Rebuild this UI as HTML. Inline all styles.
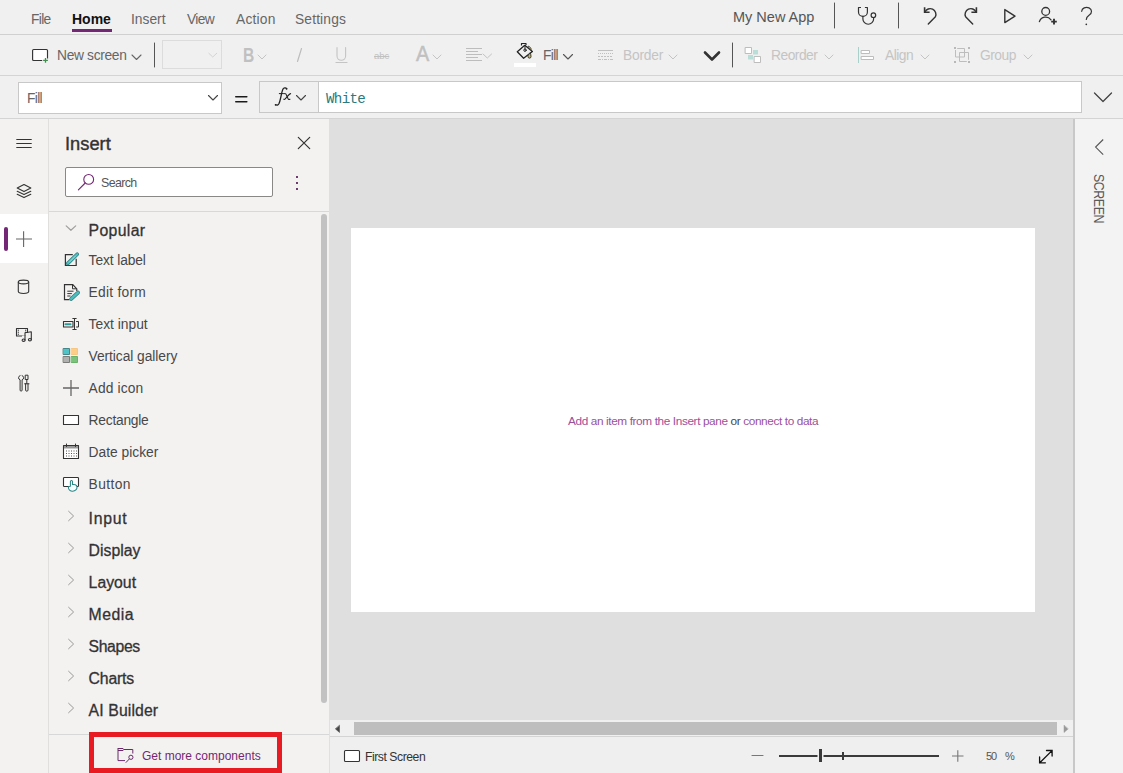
<!DOCTYPE html>
<html><head><meta charset="utf-8">
<style>
*{box-sizing:border-box;margin:0;padding:0}
html,body{width:1123px;height:773px;overflow:hidden;background:#f0f0f0;font-family:"Liberation Sans",sans-serif;color:#333}
.a{position:absolute}
.t{position:absolute;white-space:nowrap;line-height:1}
svg{position:absolute;overflow:visible}
</style></head><body>

<!-- top menubar -->
<div class="a" style="left:0;top:0;width:1123px;height:35px;background:#f0f0f0;border-bottom:1px solid #d0d0d0"></div>
<div class="t" id="m_file" style="left:31px;top:13px;font-size:13.8px;color:#666;letter-spacing:-0.667px">File</div>
<div class="t" id="m_home" style="left:72px;top:12px;font-size:14px;font-weight:bold;color:#111;letter-spacing:0px">Home</div>
<div class="a" style="left:72px;top:29px;width:40px;height:3px;background:#742774"></div>
<div class="t" id="m_insert" style="left:131px;top:13px;font-size:13.8px;color:#666">Insert</div>
<div class="t" id="m_view" style="left:187px;top:13px;font-size:13.8px;color:#666;letter-spacing:-0.667px">View</div>
<div class="t" id="m_action" style="left:236px;top:13px;font-size:13.8px;color:#666;letter-spacing:0.2px">Action</div>
<div class="t" id="m_settings" style="left:295px;top:13px;font-size:13.8px;color:#666;letter-spacing:0.143px">Settings</div>

<div class="t" id="appname" style="left:733px;top:10px;font-size:14.5px;color:#555">My New App</div>

<!-- toolbar -->
<div class="a" style="left:0;top:35px;width:1123px;height:41px;background:#f0f0f0;border-bottom:1px solid #d4d4d4"></div>

<!-- formula bar -->
<div class="a" style="left:0;top:76px;width:1123px;height:43px;background:#f0f0f0;border-bottom:1px solid #d4d4d4"></div>
<div class="a" style="left:18px;top:82px;width:204px;height:32px;background:#fff;border:1px solid #c8c8c8"></div>
<div class="t" id="f_fill" style="left:27px;top:92px;font-size:13.8px;color:#666;letter-spacing:-0.667px">Fill</div>
<div class="a" style="left:259px;top:81px;width:823px;height:32px;background:#fff;border:1px solid #c8c8c8"></div>
<div class="a" style="left:260px;top:82px;width:59px;height:30px;background:#f0f0f0;border-right:1px solid #c8c8c8"></div>
<div class="t" id="f_white" style="left:326px;top:92px;font-size:14.2px;font-family:'Liberation Mono',monospace;color:#2a7a80;letter-spacing:-0.7px">White</div>


<!-- toolbar items -->
<svg style="left:0;top:0" width="1123" height="120">
 <g fill="none" stroke-linecap="round" stroke-linejoin="round">
  <!-- new screen icon -->
  <rect x="33" y="49.5" width="14" height="11" fill="#fff" stroke="none"/>
  <path d="M42.2 60.5h-8.6a1 1 0 0 1 -1 -1v-9a1 1 0 0 1 1 -1h12.9a1 1 0 0 1 1 1v8.1" stroke="#333" stroke-width="1.15" stroke-linecap="butt"/>
  <path d="M45.5 58.1v4.7M43.1 60.4h4.8" stroke="#3f8f4e" stroke-width="1.3" stroke-linecap="butt"/>
  <path d="M132 55l4.5 4.5l4.5-4.5" stroke="#666" stroke-width="1.1"/>
  <!-- separator -->
  <path d="M154.5 43v24" stroke="#555" stroke-width="1"/>
  <!-- B chevron -->
  <path d="M258 55l4 4l4-4" stroke="#c4c4c4" stroke-width="1"/>
  <path d="M433 55l4 4l4-4" stroke="#c4c4c4" stroke-width="1"/>
  <path d="M483 54l4.3 4l4.3-4" stroke="#c4c4c4" stroke-width="1"/>
  <!-- italic slash -->
  <path d="M301.5 48.5l-4 13" stroke="#bdbdbd" stroke-width="1.2"/>
  <!-- U -->
  <path d="M337 47.5v8.5a4.3 4.3 0 0 0 8.6 0v-8.5" stroke="#c4c4c4" stroke-width="1.1"/>
  <path d="M336 62.5h11" stroke="#c4c4c4" stroke-width="1.1"/>
  <!-- align lines -->
  <path d="M466 48.5h16M466 51.5h12M466 54.5h16M466 57.5h12M466 60.5h16" stroke="#bdbdbd" stroke-width="1" stroke-linecap="butt"/>
  <!-- fill bucket -->
  <rect x="514" y="63" width="22" height="4" fill="#fff" stroke="none"/>
  <path d="M521.5 45.5v-2h4.5v1.5" stroke="#222" stroke-width="1.2" stroke-linecap="butt"/>
  <path d="M524.8 45.3l7.6 6.2l-8.8 6.8l-6.3-6.5z" stroke="#222" stroke-width="1.3"/>
  <path d="M525 45.5v3.5" stroke="#222" stroke-width="1"/>
  <circle cx="525" cy="50.2" r="1.2" stroke="#222" stroke-width="1"/>
  <path d="M528.5 46.2c1.5 0.3 2.8 1.8 2.7 3.6l-2.7-2.2z" fill="#c9bb72" stroke="#444" stroke-width="0.9"/>
  <path d="M530.3 52.8c-1 1.2-2.3 2.3-2.3 3.8a1.5 1.5 0 0 0 3 0c0-1.2-0.3-2.5-0.7-3.8z" fill="#c9bb72" stroke="#333" stroke-width="1"/>
  <!-- fill chevron -->
  <path d="M563.5 54.5l4.5 4.5l4.5-4.5" stroke="#555" stroke-width="1.1"/>
  <!-- border icon -->
  <g fill="#c0c0c0" stroke="none"><rect x="598" y="50" width="15" height="1"/><rect x="598" y="53" width="1" height="1"/><rect x="600" y="53" width="1" height="1"/><rect x="602" y="53" width="1" height="1"/><rect x="604" y="53" width="1" height="1"/><rect x="606" y="53" width="1" height="1"/><rect x="608" y="53" width="1" height="1"/><rect x="610" y="53" width="1" height="1"/><rect x="612" y="53" width="1" height="1"/><rect x="598" y="56" width="2" height="1"/><rect x="601" y="56" width="2" height="1"/><rect x="604" y="56" width="2" height="1"/><rect x="607" y="56" width="2" height="1"/><rect x="610" y="56" width="2" height="1"/><rect x="598" y="59" width="3" height="1"/><rect x="602" y="59" width="1" height="1"/><rect x="604" y="59" width="3" height="1"/><rect x="608" y="59" width="1" height="1"/><rect x="610" y="59" width="3" height="1"/></g>
  <path d="M669 55l4 4l4-4" stroke="#c4c4c4" stroke-width="1"/>
  <!-- big chevron -->
  <path d="M705 52.5l7 7l7-7" stroke="#333" stroke-width="2.6"/>
  <path d="M732.5 43v24" stroke="#555" stroke-width="1"/>
  <!-- reorder -->
  <rect x="745.5" y="47.5" width="6" height="6" fill="#fff" stroke="#bdbdbd" stroke-width="1"/>
  <rect x="753" y="50" width="5" height="4.5" fill="#b9ddd7" stroke="none"/>
  <rect x="748" y="55" width="5" height="4.5" fill="#b9ddd7" stroke="none"/>
  <rect x="754.5" y="56.5" width="6" height="6" fill="#fff" stroke="#bdbdbd" stroke-width="1"/>
  <path d="M825 55l4 4l4-4" stroke="#c4c4c4" stroke-width="1"/>
  <!-- align -->
  <path d="M858.5 47v16" stroke="#a9d0cb" stroke-width="1" stroke-linecap="butt"/>
  <rect x="861.5" y="50.5" width="8" height="3" fill="#fff" stroke="#bdbdbd" stroke-width="1"/>
  <rect x="861.5" y="56.5" width="12" height="3" fill="#fff" stroke="#bdbdbd" stroke-width="1"/>
  <path d="M921 55l4 4l4-4" stroke="#c4c4c4" stroke-width="1"/>
  <!-- group -->
  <g fill="#b8b8b8" stroke="none"><rect x="954" y="47" width="2" height="2"/><rect x="968" y="47" width="2" height="2"/><rect x="954" y="61" width="2" height="2"/><rect x="968" y="61" width="2" height="2"/></g>
  <path d="M957.2 48.5h7.3v8.5h-9v-7" stroke="#bdbdbd" stroke-width="1" stroke-linecap="butt" stroke-linejoin="miter"/>
  <path d="M966.8 61.5h-7.3v-9h9v7.3" stroke="#bdbdbd" stroke-width="1" stroke-linecap="butt" stroke-linejoin="miter"/>
  <path d="M1024 55l4 4l4-4" stroke="#c4c4c4" stroke-width="1"/>

  <!-- top right icons -->
  <path d="M834.5 3v25M898.5 3v25" stroke="#555" stroke-width="1"/>
  <!-- stethoscope -->
  <path d="M861 7.5h-2.5v4.5a4.45 4.45 0 0 0 8.9 0v-4.5h-2.5" stroke="#333" stroke-width="1.2" stroke-linecap="butt"/>
  <path d="M862.9 16.4v2.5a5.35 5.35 0 0 0 10.7 0v-1.3" stroke="#333" stroke-width="1.2"/>
  <circle cx="873.4" cy="15.2" r="2.3" stroke="#333" stroke-width="1.2"/>
  <!-- undo -->
  <path d="M924.6 7.3v5h5" stroke="#333" stroke-width="1.6" stroke-linecap="butt" stroke-linejoin="miter"/>
  <path d="M925 12a5.6 5.6 0 1 1 10.4 4.8l-7.1 7.3" stroke="#333" stroke-width="1.4"/>
  <!-- redo -->
  <path d="M976.4 7.3v5h-5" stroke="#333" stroke-width="1.6" stroke-linecap="butt" stroke-linejoin="miter"/>
  <path d="M976 12a5.6 5.6 0 1 0 -10.4 4.8l7.1 7.3" stroke="#333" stroke-width="1.4"/>
  <!-- play -->
  <path d="M1004.8 9.6v13l10.2-6.5z" stroke="#333" stroke-width="1.4"/>
  <!-- person add -->
  <circle cx="1045.7" cy="11.4" r="3.9" stroke="#333" stroke-width="1.3"/>
  <path d="M1039.4 21.6a6.6 6.6 0 0 1 11.6 -1.8" stroke="#333" stroke-width="1.3"/>
  <path d="M1054 18.8v5.6M1051.2 21.6h5.6" stroke="#333" stroke-width="1.9" stroke-linecap="butt"/>
  <!-- help -->
  <path d="M1081.7 11.3a4.9 4.1 0 1 1 7.6 3.6c-2.2 1.5 -3 2.5 -3 4.6" stroke="#333" stroke-width="1.2"/>
  <circle cx="1086.3" cy="24.3" r="0.85" fill="#333" stroke="none"/>

  <!-- formula bar -->
  <path d="M208.5 95.5l4.5 4.5l4.5-4.5" stroke="#444" stroke-width="1.1"/>
  <path d="M235.8 96.8h11M235.8 101.7h11" stroke="#1a1a1a" stroke-width="1.6" stroke-linecap="round"/>
  <path d="M296.5 95.5l4.5 4.5l4.5-4.5" stroke="#444" stroke-width="1.1"/>
  <path d="M1094.5 93l8.5 8.5l8.5-8.5" stroke="#444" stroke-width="1.3"/>
 </g>
</svg>
<div class="t" id="tb_newscreen" style="left:57px;top:49px;font-size:13.8px;color:#666;letter-spacing:-0.333px">New screen</div>
<div class="a" style="left:162px;top:40px;width:60px;height:29px;border:1px solid #dcdcdc;background:#f0f0f0"></div>
<svg style="left:0;top:0" width="400" height="80"><path d="M208.5 53l4.25 4l4.25-4" fill="none" stroke="#d4d4d4" stroke-width="1"/></svg>
<div class="t" id="tb_b" style="left:243px;top:46px;font-size:19.5px;font-weight:bold;color:#c0c0c0;transform-origin:0 0;transform:scaleX(0.8)">B</div>
<div class="t" style="left:374px;top:51px;font-size:9.5px;color:#c0c0c0;text-decoration:line-through">abc</div>
<div class="t" id="tb_a" style="left:416px;top:44px;font-size:21.5px;color:#c0c0c0;-webkit-text-stroke:0.5px #c0c0c0;transform-origin:0 0;transform:scaleX(0.92)">A</div>
<div class="t" id="tb_fill" style="left:543px;top:49px;font-size:13.8px;color:#666;letter-spacing:-0.667px">Fill</div>
<div class="t" id="tb_border" style="left:623px;top:49px;font-size:13.8px;color:#c4c4c4;letter-spacing:-0.2px">Border</div>
<div class="t" id="tb_reorder" style="left:771px;top:49px;font-size:13.8px;color:#c4c4c4;letter-spacing:-0.5px">Reorder</div>
<div class="t" id="tb_align" style="left:885px;top:49px;font-size:13.8px;color:#c4c4c4;letter-spacing:-0.5px">Align</div>
<div class="t" id="tb_group" style="left:980px;top:49px;font-size:13.8px;color:#c4c4c4;letter-spacing:-0.5px">Group</div>
<svg style="left:0;top:0" width="320" height="120"><g fill="none" stroke="#222" stroke-linecap="round">
 <path d="M286.6 88.6c-0.6-0.9-2.2-1.1-3.1-0.2c-1 1-1.5 3.2-2.2 6.4c-0.8 3.6-1.3 6.8-2.4 9c-0.7 1.3-2 1.6-3 1" stroke-width="1.3"/>
 <circle cx="286.6" cy="88.8" r="0.9" fill="#222" stroke="none"/>
 <circle cx="275.6" cy="104.8" r="0.9" fill="#222" stroke="none"/>
 <path d="M279.3 93.6h4.2" stroke-width="1"/>
 <path d="M284.6 93.6c1.2-0.3 1.7 0.5 2.2 2.2l1.2 2.8c0.4 0.9 1 1.1 1.9 0.6" stroke-width="1.1"/>
 <path d="M290.6 93.6c-0.8 0.1-1.6 0.9-3.2 2.8l-2.2 2.4c-0.5 0.5-1 0.6-1.3 0.4" stroke-width="1.1"/>
</g></svg>

<!-- left rail -->
<div class="a" style="left:0;top:119px;width:49px;height:654px;background:#f3f2f1;border-right:1px solid #e1dfdd"></div>
<div class="a" style="left:0;top:214px;width:48px;height:49px;background:#fff"></div>
<div class="a" style="left:4px;top:227px;width:4px;height:24px;border-radius:2px;background:#742774"></div>

<!-- insert panel -->
<div class="a" style="left:49px;top:119px;width:280px;height:654px;background:#f3f2f1"></div>
<div class="t" id="p_title" style="left:65px;top:135px;font-size:18.3px;color:#333;-webkit-text-stroke:0.4px #333">Insert</div>
<div class="a" style="left:65px;top:167px;width:208px;height:30px;background:#fff;border:1px solid #8a8886;border-radius:2px"></div>
<div class="t" id="p_search" style="left:101px;top:177px;font-size:12.4px;color:#555;letter-spacing:-0.6px">Search</div>
<div class="a" style="left:49px;top:211px;width:280px;height:1px;background:#d8d8d8"></div>
<div class="a" style="left:321px;top:214px;width:6px;height:489px;border-radius:3px;background:#c2c2c2"></div>
<div class="a" style="left:49px;top:734px;width:280px;height:1px;background:#d8d8d8"></div>


<svg style="left:0;top:0" width="330" height="773">
 <g fill="none" stroke-linecap="round" stroke-linejoin="round">
  <path d="M298.3 137.3l11.4 11.4M309.7 137.3l-11.4 11.4" stroke="#333" stroke-width="1.2"/>
  <circle cx="88.7" cy="179.4" r="4.9" stroke="#742774" stroke-width="1.1"/>
  <path d="M85.2 183l-6.8 6.8" stroke="#742774" stroke-width="1.1"/>
  <g fill="#6e3a6e" stroke="none"><rect x="296" y="176" width="2" height="2"/><rect x="296" y="182" width="2" height="2"/><rect x="296" y="188" width="2" height="2"/></g>
  <path d="M66.2 225.9l4.7 4.4l4.8-4.4" stroke="#a0a0a0" stroke-width="1.25"/>
  <!-- text label -->
  <path d="M72.8 254.7h-7.4v10.8h10.8v-6.8" stroke="#333" stroke-width="1.2" stroke-linecap="butt" stroke-linejoin="miter"/>
  <path d="M77.2 254.2l-9.4 9.2" stroke="#2b7f80" stroke-width="3.6" stroke-linecap="round"/>
  <path d="M77.2 254.2l-9.4 9.2" stroke="#4dbdbd" stroke-width="2.2" stroke-linecap="round"/>
  <path d="M75.5 256l-6 6" stroke="#cdeeee" stroke-width="0.6"/>
  <!-- edit form -->
  <path d="M69.5 299.6h-5v-15h8.3l4 4.3v2" stroke="#333" stroke-width="1.2" stroke-linecap="butt" stroke-linejoin="miter"/>
  <path d="M72.5 284.6v4.2h4" stroke="#333" stroke-width="1" stroke-linecap="butt"/>
  <path d="M67.3 291.2h6.2M67.3 293.6h4.6M67.3 296h3.2" stroke="#333" stroke-width="1" stroke-linecap="butt"/>
  <path d="M78 292.6l-6.8 6.3" stroke="#2b7f80" stroke-width="4" stroke-linecap="round"/>
  <path d="M78 292.6l-6.8 6.3" stroke="#4dbdbd" stroke-width="2.6" stroke-linecap="round"/>
  <!-- text input -->
  <rect x="63.5" y="321.5" width="9.5" height="5.5" stroke="#333" stroke-width="1.1"/>
  <path d="M65.5 324.2h5" stroke="#2b9a9a" stroke-width="2"/>
  <path d="M74.5 318.5v11M72.8 318.5h3.4M72.8 329.5h3.4" stroke="#333" stroke-width="1"/>
  <path d="M76.5 321.5h2v5.5h-2" stroke="#333" stroke-width="1"/>
  <!-- gallery -->
  <rect x="63.5" y="348.5" width="6" height="6" fill="#4fc3c8" stroke="#3c7b7e" stroke-width="0.9"/>
  <rect x="71.5" y="348.5" width="6" height="6" fill="#fdce87" stroke="#f5c47c" stroke-width="0.9"/>
  <rect x="63.5" y="356.5" width="6" height="6" fill="#b0b0b0" stroke="#707070" stroke-width="0.9"/>
  <rect x="71.5" y="356.5" width="6" height="6" fill="#7cc27c" stroke="#5fae60" stroke-width="0.9"/>
  <!-- add icon -->
  <path d="M63 388h16M71 380v16" stroke="#666" stroke-width="1.3" stroke-linecap="butt"/>
  <!-- rectangle -->
  <rect x="63.5" y="415.5" width="15" height="9" fill="#fff" stroke="#333" stroke-width="1.1"/>
  <!-- date picker -->
  <rect x="63.5" y="445.5" width="15" height="13" fill="#fff" stroke="#333" stroke-width="1.1"/>
  <rect x="64" y="446" width="14" height="2.5" fill="#999" stroke="none"/>
  <path d="M66.5 444v2.5M75.5 444v2.5" stroke="#333" stroke-width="1"/>
  <g fill="#555" stroke="none">
   <rect x="66" y="450.5" width="1" height="1"/><rect x="68.5" y="450.5" width="1" height="1"/><rect x="71" y="450.5" width="1" height="1"/><rect x="73.5" y="450.5" width="1" height="1"/><rect x="76" y="450.5" width="1" height="1"/>
   <rect x="66" y="453" width="1" height="1"/><rect x="68.5" y="453" width="1" height="1"/><rect x="71" y="453" width="1" height="1"/><rect x="73.5" y="453" width="1" height="1"/><rect x="76" y="453" width="1" height="1"/>
   <rect x="66" y="455.5" width="1" height="1"/><rect x="68.5" y="455.5" width="1" height="1"/><rect x="71" y="455.5" width="1" height="1"/><rect x="73.5" y="455.5" width="1" height="1"/><rect x="76" y="455.5" width="1" height="1"/>
  </g>
  <!-- button -->
  <rect x="63.5" y="477.5" width="15" height="9" rx="0.8" fill="#fff" stroke="#333" stroke-width="1.1"/>
  <path d="M70.4 486.2v-4.7a1.05 1.05 0 0 1 2.1 0v3c1.6-0.3 4.5 0.2 4.5 2.4c0.1 2.5-1.7 4.3-4.3 4.3c-2.6 0-4.3-1.9-4.3-3.9c0-0.7 0.8-1.2 2-1.1z" fill="#f4ffff" stroke="#2a8585" stroke-width="1.05"/>
  <!-- category chevrons -->
  <g stroke="#999" stroke-width="1">
   <path d="M68.6 511.3l5 4.7l-5 4.7"/>
   <path d="M68.6 543.3l5 4.7l-5 4.7"/>
   <path d="M68.6 575.3l5 4.7l-5 4.7"/>
   <path d="M68.6 607.3l5 4.7l-5 4.7"/>
   <path d="M68.6 639.3l5 4.7l-5 4.7"/>
   <path d="M68.6 671.3l5 4.7l-5 4.7"/>
   <path d="M68.6 703.3l5 4.7l-5 4.7"/>
  </g>
  <!-- get more components icon -->
  <g stroke="#6a2a6a" stroke-width="1" stroke-linecap="butt" stroke-linejoin="miter">
   <path d="M118 748.5h5.3M118 750.5h5.3"/>
   <path d="M123.3 749.5h9.5v4"/>
   <path d="M118 748v12.6h7"/>
   <circle cx="130.9" cy="757.3" r="2.1"/>
   <path d="M129.4 758.9l-3.6 3.8"/>
  </g>
 </g>
</svg>
<div class="t" id="c_popular" style="left:88.6px;top:223px;font-size:15.8px;color:#333;-webkit-text-stroke:0.3px #333;letter-spacing:0.333px">Popular</div>
<div class="t" id="i_textlabel" style="left:88.6px;top:254px;font-size:13.8px;color:#484848;letter-spacing:-0.111px">Text label</div>
<div class="t" id="i_editform" style="left:88.6px;top:286px;font-size:13.8px;color:#484848;letter-spacing:0.25px">Edit form</div>
<div class="t" id="i_textinput" style="left:88.6px;top:318px;font-size:13.8px;color:#484848">Text input</div>
<div class="t" id="i_gallery" style="left:88.6px;top:350px;font-size:13.8px;color:#484848;letter-spacing:-0.067px">Vertical gallery</div>
<div class="t" id="i_addicon" style="left:88.6px;top:382px;font-size:13.8px;color:#484848;letter-spacing:0.143px">Add icon</div>
<div class="t" id="i_rect" style="left:88.6px;top:414px;font-size:13.8px;color:#484848;letter-spacing:-0.25px">Rectangle</div>
<div class="t" id="i_date" style="left:88.6px;top:446px;font-size:13.8px;color:#484848">Date picker</div>
<div class="t" id="i_button" style="left:88.6px;top:478px;font-size:13.8px;color:#484848;letter-spacing:0.4px">Button</div>
<div class="t" id="c_input" style="left:88.6px;top:511px;font-size:15.8px;color:#333;-webkit-text-stroke:0.3px #333;letter-spacing:0.75px">Input</div>
<div class="t" id="c_display" style="left:88.6px;top:543px;font-size:15.8px;color:#333;-webkit-text-stroke:0.3px #333">Display</div>
<div class="t" id="c_layout" style="left:88.6px;top:575px;font-size:15.8px;color:#333;-webkit-text-stroke:0.3px #333">Layout</div>
<div class="t" id="c_media" style="left:88.6px;top:607px;font-size:15.8px;color:#333;-webkit-text-stroke:0.3px #333;letter-spacing:0.5px">Media</div>
<div class="t" id="c_shapes" style="left:88.6px;top:639px;font-size:15.8px;color:#333;-webkit-text-stroke:0.3px #333;letter-spacing:-0.4px">Shapes</div>
<div class="t" id="c_charts" style="left:88.6px;top:671px;font-size:15.8px;color:#333;-webkit-text-stroke:0.3px #333;letter-spacing:-0.2px">Charts</div>
<div class="t" id="c_ai" style="left:88.6px;top:703px;font-size:15.8px;color:#333;-webkit-text-stroke:0.3px #333;letter-spacing:0.111px">AI Builder</div>
<div class="t" id="p_getmore" style="left:142px;top:750px;font-size:12px;color:#742774">Get more components</div>

<!-- canvas area -->
<div class="a" style="left:329px;top:119px;width:746px;height:601px;background:#dfdfdf;border-right:2px solid #c8c8c8"></div>
<div class="a" style="left:351px;top:228px;width:684px;height:384px;background:#fff"></div>

<!-- right panel -->
<div class="a" style="left:1075px;top:119px;width:48px;height:654px;background:#f3f3f3"></div>

<!-- h scroll -->
<div class="a" style="left:329px;top:720px;width:744px;height:17px;background:#f0f0f0;border-bottom:1px solid #d4d4d4"></div>
<div class="a" style="left:354px;top:722px;width:703px;height:13px;background:#bebebe"></div>

<!-- bottom bar -->
<div class="a" style="left:329px;top:737px;width:744px;height:36px;background:#efefef"></div>
<div class="a" style="left:1073px;top:719px;width:2px;height:54px;background:#c8c8c8"></div>
<div class="a" style="left:329px;top:720px;width:1px;height:53px;background:#e0e0e0"></div>


<svg style="left:0;top:700px" width="1123" height="73">
 <g fill="none" stroke-linecap="round">
  <path d="M339.5 25.5v7l-4-3.5z" fill="#444" stroke="#444" stroke-width="0.5"/>
  <path d="M1064 25.5v7l4-3.5z" fill="#999" stroke="#999" stroke-width="0.5"/>
  <rect x="344.5" y="50.5" width="15" height="11" rx="1" fill="#fff" stroke="#333" stroke-width="1.1"/>
  <path d="M752 55.5h11" stroke="#777" stroke-width="1.1"/>
  <rect x="779" y="55" width="160" height="2" fill="#3a3a3a" stroke="none"/>
  <rect x="817.5" y="48" width="6" height="15" fill="#efefef" stroke="none"/>
  <rect x="819" y="49" width="3" height="13" fill="#3a3a3a" stroke="none"/>
  <rect x="842" y="52" width="2" height="8" fill="#3a3a3a" stroke="none"/>
  <path d="M952 56h11.5M957.8 50.2v11.5" stroke="#777" stroke-width="1.1" stroke-linecap="butt"/>
  <path d="M1039.8 62.8l12.2-12.2M1046.5 50.5h5.6v5.6M1039.6 57v5.8h5.8" stroke="#111" stroke-width="1.3"/>
 </g>
</svg>
<div class="t" id="b_first" style="left:365px;top:751px;font-size:12.2px;color:#333;letter-spacing:-0.455px">First Screen</div>
<div class="t" id="b_50" style="left:986px;top:751px;font-size:11px;color:#555;letter-spacing:-1px">50</div>
<div class="t" id="b_pct" style="left:1005px;top:751px;font-size:11px;color:#555">%</div>

<div class="t" id="cv_text" style="left:568px;top:416px;font-size:11.8px;color:#9c4f9c;letter-spacing:-0.38px">Add an item from the Insert pane <span style="color:#444">or</span> connect to data</div>
<svg style="left:1075px;top:119px" width="48" height="120">
 <path d="M28.2 20.5l-7.6 7.6l7.6 7.6" fill="none" stroke="#555" stroke-width="1.1"/>
</svg>
<div class="t" id="screen" style="left:1094px;top:174px;font-size:12.4px;color:#5a5a5a;transform-origin:0 0;transform:rotate(90deg) translate(0,-11.5px) scaleY(1.12);letter-spacing:-0.45px">SCREEN</div>

<svg style="left:0;top:0" width="49" height="400">
 <g fill="none" stroke="#333" stroke-width="1.1" stroke-linecap="round" stroke-linejoin="round">
  <path d="M16.3 139.5h15.4M16.3 143.5h15.4M16.3 147.5h15.4" stroke-linecap="butt"/>
  <path d="M24 184.6l6.8 3.5l-6.8 3.5l-6.8-3.5z"/>
  <path d="M17.2 191.2l6.8 3.3l6.8-3.3"/>
  <path d="M17.2 194.3l6.8 3.3l6.8-3.3"/>
  <path d="M16 239h16M23.6 231.3v15.6" stroke="#666" stroke-width="1.1" stroke-linecap="butt"/>
  <ellipse cx="23.5" cy="282" rx="5.2" ry="1.9"/>
  <path d="M18.3 282v9.6a5.2 1.9 0 0 0 10.4 0v-9.6"/>
  <rect x="16.5" y="328.5" width="11" height="7.5"/>
  <path d="M18.3 330v0.6M18.3 332v0.6M18.3 334v0.6M25.7 330v0.6M25.7 332v0.6" stroke-width="0.9"/>
  <path d="M23 336.5h4v-3" stroke="#f3f2f1" stroke-width="2.2"/>
  <path d="M25 340v-7.2l6.3-1v7.7" stroke-width="1.1"/>
  <ellipse cx="23.6" cy="340.2" rx="1.5" ry="1.2"/>
  <ellipse cx="29.9" cy="339.7" rx="1.5" ry="1.2"/>
  <path d="M20.1 375.6a2.2 2.2 0 0 0 0 4.2v10.3a1 1 0 0 0 2 0v-10.3a2.2 2.2 0 0 0 0 -4.2" stroke-width="1"/>
  <path d="M25.6 375.2h2.4v4.3h-2.4z M26.8 379.5v4M24.6 383.8h4.4M25.6 383.8v6.2a1.2 1.2 0 0 0 2.4 0v-6.2" stroke-width="1"/>
 </g>
</svg>

<!-- red box -->
<div class="a" style="left:89px;top:732px;width:193px;height:41px;border:5px solid #e81a22"></div>

</body></html>
